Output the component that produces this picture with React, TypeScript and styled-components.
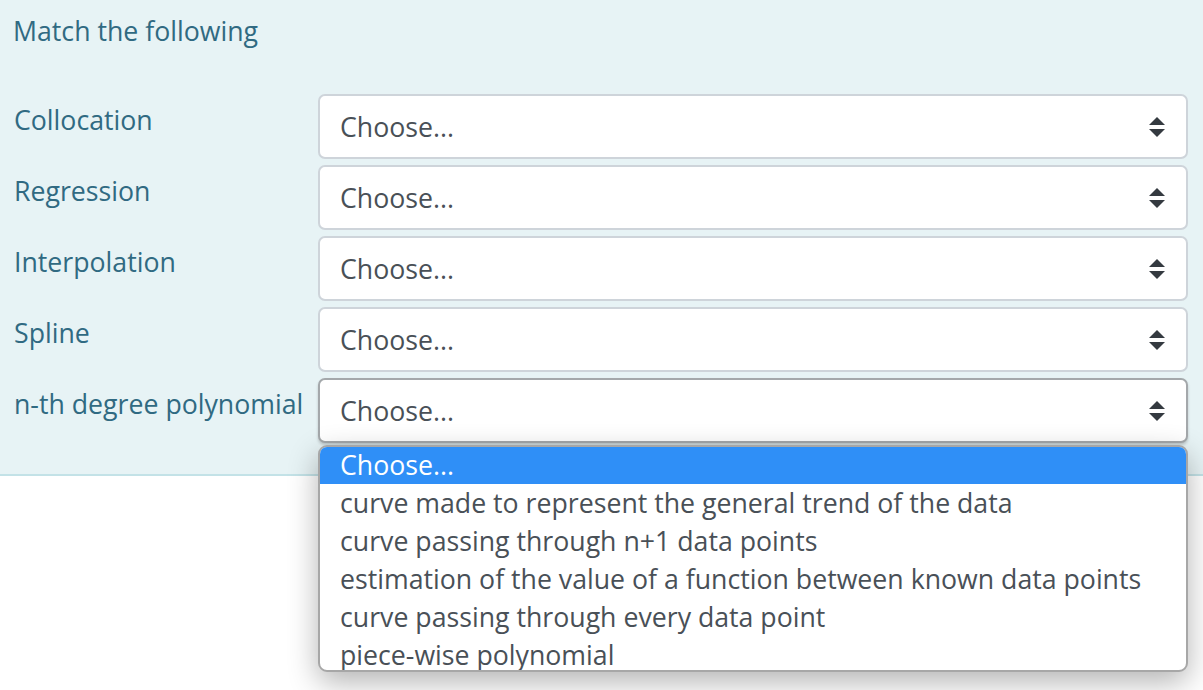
import React from "react";
import styled, { createGlobalStyle } from "styled-components";

const Global = createGlobalStyle`
  html, body { margin: 0; padding: 0; background: #ffffff; }
  body { font-family: "Open Sans", "Noto Sans", sans-serif; }
`;

const Page = styled.div`
  width: 1203px;
  height: 690px;
  position: relative;
  overflow: hidden;
  background: #ffffff;
`;

const Panel = styled.div`
  background: #e7f3f5;
  border-bottom: 2px solid #c3e2e7;
  padding: 12px 15px 31px 14px;
  color: #306a82;
`;

const Title = styled.div`
  font-size: 26.7px;
  line-height: 38px;
  margin-bottom: 44px;
  margin-left: -1px;
`;

const Rows = styled.div`
  display: grid;
  grid-template-columns: 304px 1fr;
  row-gap: 6px;
`;

const Label = styled.div`
  font-size: 26.7px;
  line-height: 38px;
  margin-top: 7px;
  white-space: nowrap;
`;

const SelectWrap = styled.div`
  position: relative;
`;

const SelectBox = styled.div<{ $open?: boolean }>`
  height: 65px;
  box-sizing: border-box;
  background: #ffffff;
  border: 2px solid ${(p) => (p.$open ? "#a4a8ab" : "#ced4da")};
  border-radius: 7px;
  display: flex;
  align-items: center;
  padding: 0 21px 0 20px;
  color: #495057;
  font-size: 26.7px;
  box-shadow: ${(p) => (p.$open ? "0 2px 3px rgba(0,0,0,0.18)" : "none")};
`;

const SelectText = styled.span`
  flex: 1;
`;

const Arrows = styled.svg`
  width: 16px;
  height: 20px;
`;

const Dropdown = styled.div`
  position: absolute;
  left: 0;
  right: 0;
  top: 67px;
  height: 227px;
  box-sizing: border-box;
  background: #ffffff;
  border: 2px solid #a7a7a7;
  border-radius: 9px;
  overflow: hidden;
  box-shadow: 0 10px 30px rgba(0, 0, 0, 0.3);
  z-index: 5;
`;

const Option = styled.div<{ $active?: boolean }>`
  height: 37px;
  line-height: 36px;
  padding-left: 20px;
  font-size: 26.7px;
  color: ${(p) => (p.$active ? "#ffffff" : "#495057")};
  background: ${(p) => (p.$active ? "#2f8ff7" : "transparent")};
  white-space: nowrap;
  & + & {
    height: 38px;
    line-height: 38px;
  }
`;

const ArrowIcon = () => (
  <Arrows viewBox="0 0 16 20">
    <polygon points="0,8 8,0 16,8" fill="#343a40" />
    <polygon points="0,12 16,12 8,20" fill="#343a40" />
  </Arrows>
);

const labels = [
  "Collocation",
  "Regression",
  "Interpolation",
  "Spline",
  "n-th degree polynomial",
];

const options = [
  "Choose...",
  "curve made to represent the general trend of the data",
  "curve passing through n+1 data points",
  "estimation of the value of a function between known data points",
  "curve passing through every data point",
  "piece-wise polynomial",
];

export default function App() {
  return (
    <Page>
      <Global />
      <Panel>
        <Title>Match the following</Title>
        <Rows>
          {labels.map((l, i) => {
            const open = i === labels.length - 1;
            return (
              <React.Fragment key={l}>
                <Label>{l}</Label>
                <SelectWrap>
                  <SelectBox $open={open}>
                    <SelectText>Choose...</SelectText>
                    <ArrowIcon />
                  </SelectBox>
                  {open && (
                    <Dropdown>
                      {options.map((o, j) => (
                        <Option key={o} $active={j === 0}>
                          {o}
                        </Option>
                      ))}
                    </Dropdown>
                  )}
                </SelectWrap>
              </React.Fragment>
            );
          })}
        </Rows>
      </Panel>
    </Page>
  );
}
